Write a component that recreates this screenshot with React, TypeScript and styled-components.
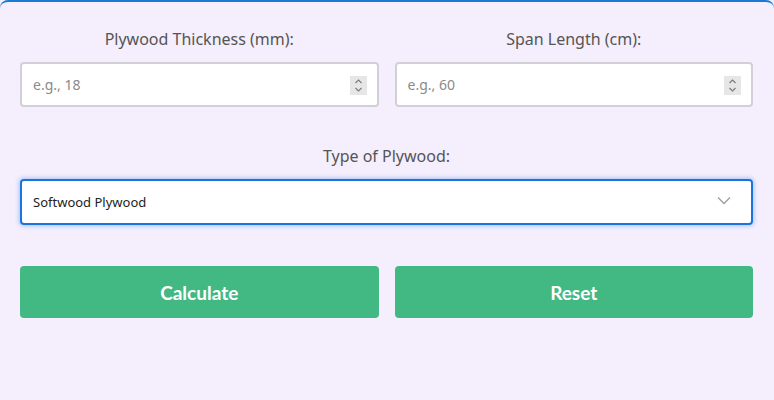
import React, { ReactElement, useState } from 'react';
import styled, { createGlobalStyle } from 'styled-components';

const GlobalStyle = createGlobalStyle`
	html, body {
		margin: 0;
		padding: 0;
		background: #f4eefd;
	}
	* {
		box-sizing: border-box;
	}
`;

const StyledCard = styled.section`
	min-height: 400px;
	background: #f4eefd;
	border-top: 2px solid #1b7bd4;
	border-radius: 8px;
	padding: 25px 21px 20px 20px;
	font-family: 'Noto Sans', 'Open Sans', sans-serif;
`;

const StyledGrid = styled.div`
	display: grid;
	grid-template-columns: 1fr 1fr;
	column-gap: 16px;
`;

const StyledField = styled.div<{ $top?: number }>`
	display: flex;
	flex-direction: column;
	margin-top: ${({ $top }): string => `${$top ?? 0}px`};
`;

const StyledLabel = styled.label`
	text-align: center;
	font-size: 16px;
	line-height: 24px;
	font-weight: 400;
	color: #555;
	margin-bottom: 11px;
`;

const StyledInputWrap = styled.div`
	position: relative;
`;

const StyledInput = styled.input`
	width: 100%;
	height: 45px;
	padding: 0 40px 0 11px;
	border: 2px solid #d2d0d6;
	border-radius: 4px;
	background: #fff;
	font-family: inherit;
	font-size: 14px;
	color: #333;
	outline: none;
	-moz-appearance: textfield;

	&::placeholder {
		color: #8a8a8a;
	}

	&::-webkit-inner-spin-button,
	&::-webkit-outer-spin-button {
		-webkit-appearance: none;
		margin: 0;
	}
`;

const StyledSpinner = styled.span`
	position: absolute;
	right: 12px;
	top: 14px;
	width: 17px;
	height: 19px;
	background: #e6e6e6;
	display: flex;
	align-items: center;
	justify-content: center;
	pointer-events: none;
`;

const StyledSelectWrap = styled.div`
	position: relative;
`;

const StyledSelect = styled.select`
	width: 100%;
	height: 46px;
	padding: 0 40px 0 11px;
	border: 2px solid #1a74e0;
	border-radius: 4px;
	background: #fff;
	box-shadow: 0 0 4px 1px rgba(26, 116, 224, 0.35);
	font-family: inherit;
	font-size: 13px;
	color: #222;
	outline: none;
	appearance: none;
`;

const StyledChevron = styled.span`
	position: absolute;
	right: 22px;
	top: 17px;
	display: flex;
	pointer-events: none;
`;

const StyledButtons = styled(StyledGrid)`
	margin-top: 41px;
`;

const StyledButton = styled.button`
	height: 52px;
	border: none;
	border-radius: 4px;
	background: #42b983;
	color: #fff;
	font-family: Lato, 'Noto Sans', sans-serif;
	font-weight: 700;
	font-size: 19px;
	cursor: pointer;
`;

const Spinner = (): ReactElement => (
	<StyledSpinner>
		<svg width="9" height="15" viewBox="0 0 9 15" fill="none" stroke="#7a7a7a" strokeWidth="1.1">
			<path d="M1.5 5 L4.5 2 L7.5 5" />
			<path d="M1.5 10 L4.5 13 L7.5 10" />
		</svg>
	</StyledSpinner>
);

const NumberField = ({ label, placeholder }: { label: string; placeholder: string }): ReactElement => {
	const [value, setValue] = useState('');
	return (
		<StyledField>
			<StyledLabel>{label}</StyledLabel>
			<StyledInputWrap>
				<StyledInput type="number" placeholder={placeholder} value={value} onChange={(e): void => setValue(e.target.value)} />
				<Spinner />
			</StyledInputWrap>
		</StyledField>
	);
};

const App = (): ReactElement => {
	const [type, setType] = useState('softwood');

	return (
		<>
			<GlobalStyle />
			<StyledCard>
				<StyledGrid>
					<NumberField label="Plywood Thickness (mm):" placeholder="e.g., 18" />
					<NumberField label="Span Length (cm):" placeholder="e.g., 60" />
				</StyledGrid>
				<StyledField $top={37}>
					<StyledLabel>Type of Plywood:</StyledLabel>
					<StyledSelectWrap>
						<StyledSelect value={type} onChange={(e): void => setType(e.target.value)}>
							<option value="softwood">Softwood Plywood</option>
							<option value="hardwood">Hardwood Plywood</option>
							<option value="marine">Marine Plywood</option>
						</StyledSelect>
						<StyledChevron>
							<svg width="14" height="9" viewBox="0 0 14 9" fill="none" stroke="#a0a0a0" strokeWidth="1.5">
								<path d="M1 1.5 L7 7.5 L13 1.5" />
							</svg>
						</StyledChevron>
					</StyledSelectWrap>
				</StyledField>
				<StyledButtons>
					<StyledButton type="button">Calculate</StyledButton>
					<StyledButton type="button">Reset</StyledButton>
				</StyledButtons>
			</StyledCard>
		</>
	);
};

export default App;
